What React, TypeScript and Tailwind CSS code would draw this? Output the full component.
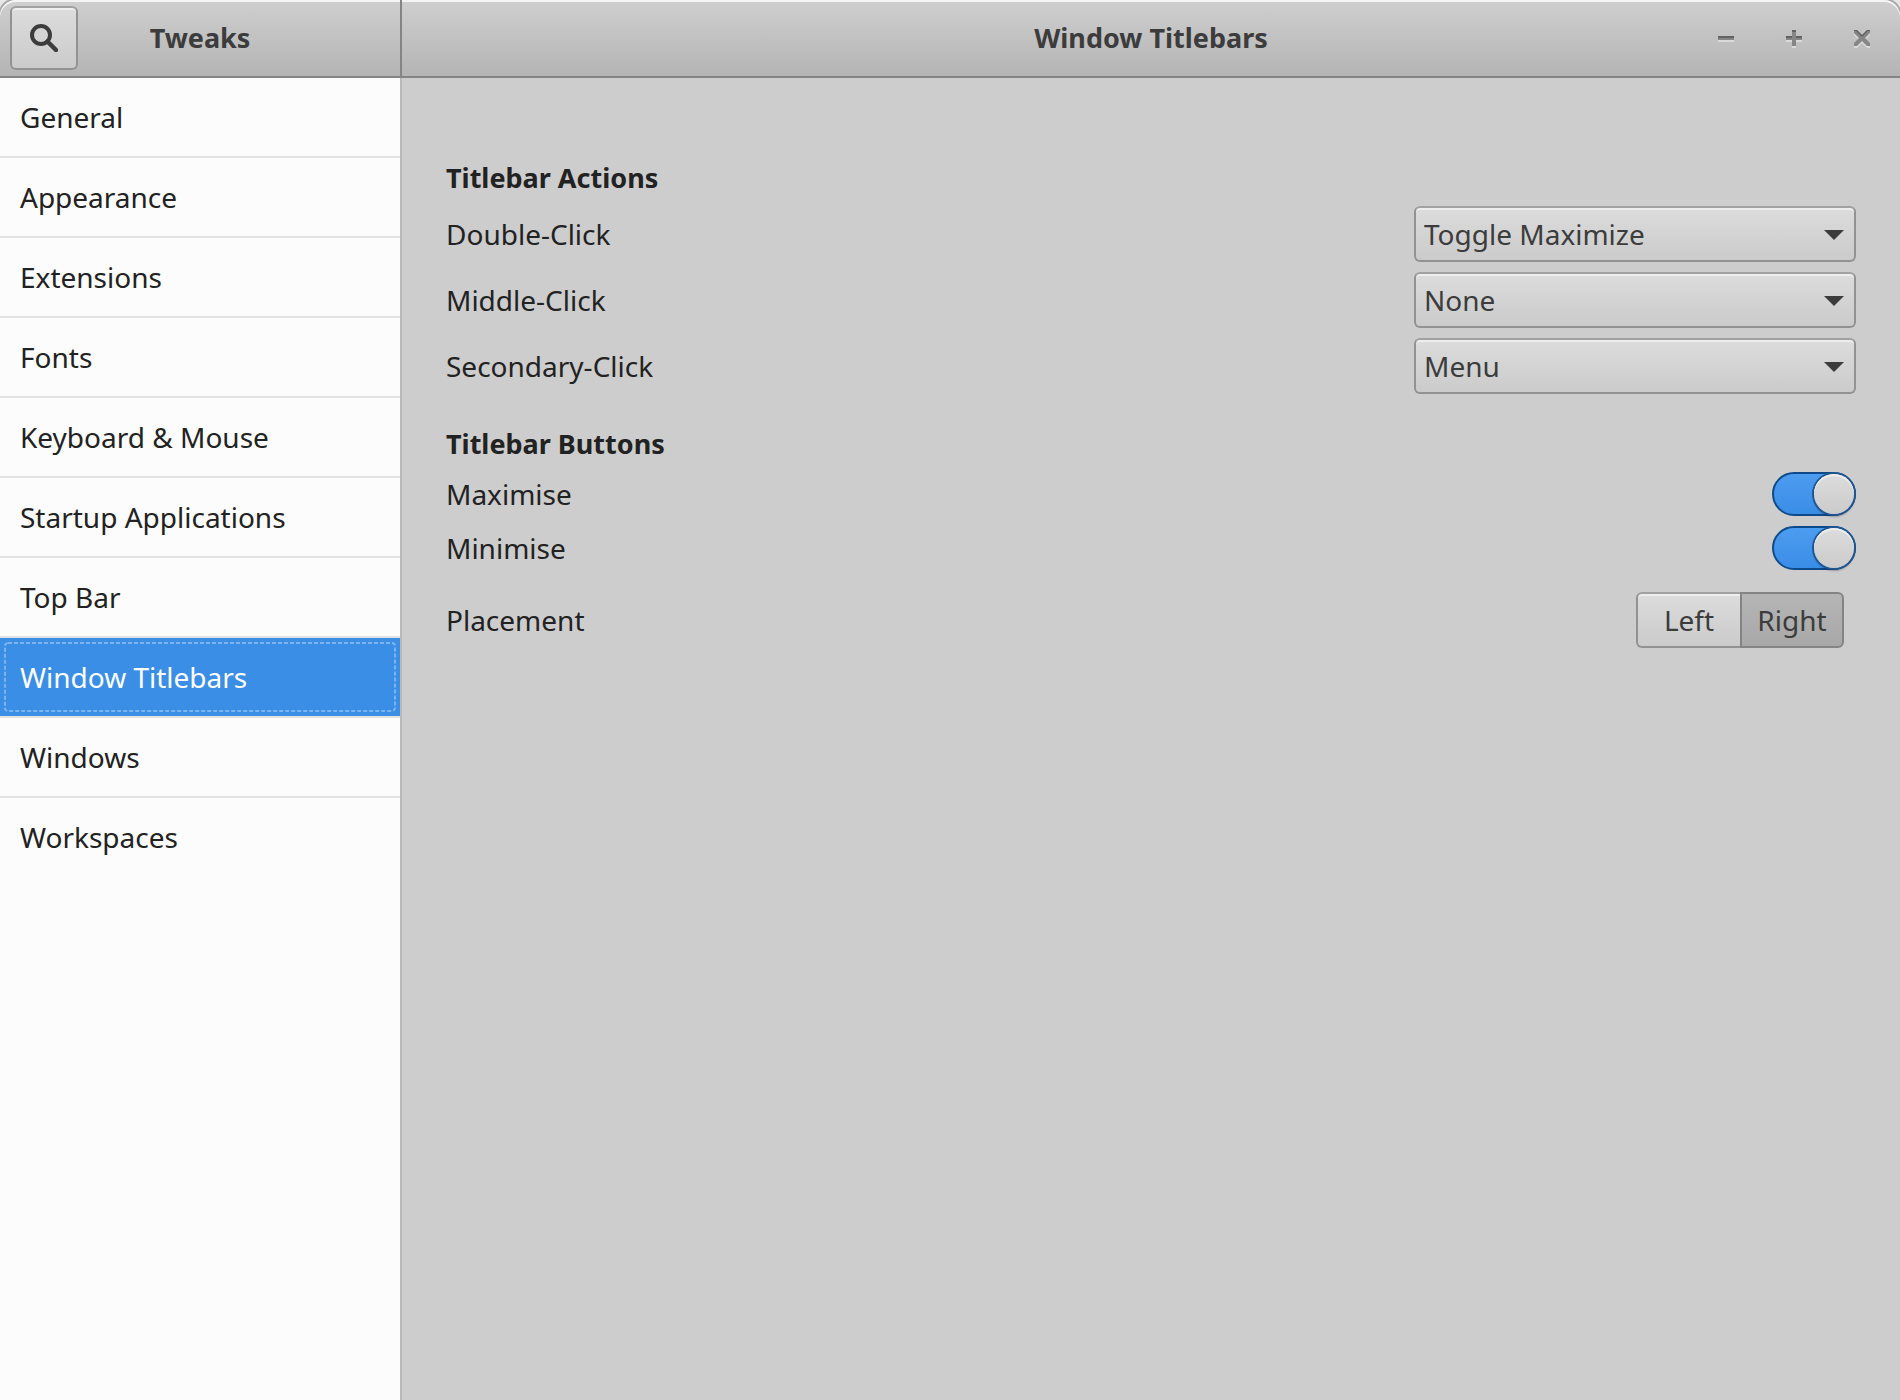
import { useState } from "react";

const sections = [
  "General",
  "Appearance",
  "Extensions",
  "Fonts",
  "Keyboard & Mouse",
  "Startup Applications",
  "Top Bar",
  "Window Titlebars",
  "Windows",
  "Workspaces",
];

const clickActions = ["Toggle Maximize", "Minimize", "Lower", "Menu", "None"];

const raised =
  "border-2 border-[#929292] border-t-[#a1a1a1] bg-linear-to-b from-[#dcdcdc] to-[#cbcbcb] shadow-[inset_0_2px_0_#eeeeee]";

function SearchIcon() {
  return (
    <svg width="28" height="28" viewBox="0 0 28 28" fill="none" stroke="#3c3c3c" aria-hidden="true">
      <circle cx="11" cy="11" r="9" strokeWidth="4" />
      <path d="M17.5 17.5 26 26" strokeWidth="4.5" strokeLinecap="round" />
    </svg>
  );
}

function FocusRing() {
  return (
    <svg className="pointer-events-none absolute inset-1 size-[calc(100%-8px)] overflow-visible" aria-hidden="true">
      <rect
        x="1"
        y="1"
        rx="3"
        className="h-[calc(100%-2px)] w-[calc(100%-2px)]"
        fill="none"
        stroke="#7db4ee"
        strokeWidth="2"
        strokeDasharray="4 2"
      />
    </svg>
  );
}

function WindowButton({ label, path, shade }: { label: string; path: string; shade: string }) {
  return (
    <button type="button" aria-label={label} className="flex size-12 items-center justify-center">
      <svg width="20" height="20" viewBox="0 0 20 20" aria-hidden="true">
        <path d={path} transform="translate(0 2)" fill="#dadada" />
        <path d={path} fill="#868686" />
        <path d={shade} fill="#626262" />
      </svg>
    </button>
  );
}

function ActionRow({ id, label, initial }: { id: string; label: string; initial: string }) {
  const [value, setValue] = useState(initial);

  return (
    <div className="flex items-center justify-between">
      <label htmlFor={id}>{label}</label>
      <div className="relative w-[442px]">
        <select
          id={id}
          value={value}
          onChange={(e) => setValue(e.target.value)}
          className={`block h-14 w-full appearance-none rounded-md px-2 text-[#3c3c3c] ${raised}`}
        >
          {clickActions.map((action) => (
            <option key={action}>{action}</option>
          ))}
        </select>
        <svg
          width="20"
          height="10"
          viewBox="0 0 20 10"
          className="pointer-events-none absolute top-6 right-3"
          aria-hidden="true"
        >
          <path d="M0 0h20L10 10z" fill="#3c3c3c" />
        </svg>
      </div>
    </div>
  );
}

function SwitchRow({ id, label }: { id: string; label: string }) {
  const [on, setOn] = useState(true);

  return (
    <div className="flex items-center justify-between">
      <label htmlFor={id}>{label}</label>
      <input
        id={id}
        type="checkbox"
        role="switch"
        checked={on}
        onChange={(e) => setOn(e.target.checked)}
        className="flex h-11 w-[84px] appearance-none rounded-full border-2 border-[#929292] bg-[#b4b4b4] before:size-10 before:rounded-full before:bg-linear-to-b before:from-[#dcdcdc] before:to-[#cbcbcb] before:shadow-[0_0_0_2px_#1f5590,0_3px_2px_#00000040,inset_0_2px_0_#eeeeee] checked:justify-end checked:border-[#0f4a88] checked:bg-linear-to-b checked:from-[#4c9cf0] checked:to-[#3a8de6]"
      />
    </div>
  );
}

export default function App() {
  const [section, setSection] = useState("Window Titlebars");
  const [placement, setPlacement] = useState("Right");

  return (
    <div className="flex min-h-screen flex-col bg-[#e6e6e6] font-['Noto_Sans',sans-serif] text-[28px] leading-9 text-[#222222]">
      <header className="flex h-[78px] rounded-t-2xl border-b-2 border-[#848484] bg-linear-to-b from-[#cfcfcf] to-[#b4b4b4] text-[27px] font-bold text-[#3c3c3c] shadow-[inset_0_2px_0_#f4f4f4,0_0_0_2px_#a8a8a8]">
        <div className="flex w-[402px] shrink-0 items-center border-r-2 border-[#848484] px-2.5">
          <div className="flex-1">
            <button
              type="button"
              aria-label="Search"
              className={`flex h-16 w-[68px] items-center justify-center rounded-md ${raised}`}
            >
              <SearchIcon />
            </button>
          </div>
          <h1>Tweaks</h1>
          <div className="flex-1" />
        </div>
        <div className="flex flex-1 items-center px-3.5">
          <div className="flex-1" />
          <h2>{section}</h2>
          <div className="flex flex-1 justify-end gap-5">
            <WindowButton label="Minimize" path="M2 8h16v4H2z" shade="M2 8h16v2H2z" />
            <WindowButton
              label="Maximize"
              path="M8 2h4v6h6v4h-6v6H8v-6H2V8h6z"
              shade="M8 2h4v2H8zM2 8h6v2H2zM12 8h6v2h-6z"
            />
            <WindowButton
              label="Close"
              path="M2 2h3l5 5 5-5h3v3l-5 5 5 5v3h-3l-5-5-5 5H2v-3l5-5-5-5z"
              shade="M2 2h3l5 5 5-5h3v1h-2l-6 6-6-6H2z"
            />
          </div>
        </div>
      </header>

      <div className="flex flex-1">
        <nav className="w-[402px] shrink-0 border-r-2 border-[#b9b9b9] bg-[#fcfcfc]">
          <ul>
            {sections.map((name) => (
              <li key={name} className="border-b-2 border-[#e2e2e2] last:border-b-0">
                <button
                  type="button"
                  aria-current={name === section ? "page" : undefined}
                  onClick={() => setSection(name)}
                  className="relative block h-[78px] w-full px-5 text-left aria-[current=page]:bg-[#3a8ee6] aria-[current=page]:text-white"
                >
                  {name}
                  {name === section && <FocusRing />}
                </button>
              </li>
            ))}
          </ul>
        </nav>

        <main className="flex-1 bg-[#cdcdcd] px-11 pt-[82px]">
          <h3 className="mb-2.5 text-[27px] font-bold">Titlebar Actions</h3>
          <div className="flex flex-col gap-2.5">
            <ActionRow id="double-click" label="Double-Click" initial="Toggle Maximize" />
            <ActionRow id="middle-click" label="Middle-Click" initial="None" />
            <ActionRow id="secondary-click" label="Secondary-Click" initial="Menu" />
          </div>

          <h3 className="mt-8 mb-2.5 text-[27px] font-bold">Titlebar Buttons</h3>
          <div className="flex flex-col gap-2.5">
            <SwitchRow id="maximise" label="Maximise" />
            <SwitchRow id="minimise" label="Minimise" />
          </div>
          <div className="mt-[22px] flex items-center justify-between">
            <span id="placement">Placement</span>
            <div role="group" aria-labelledby="placement" className="mr-3 flex text-[#3c3c3c]">
              {["Left", "Right"].map((side) => (
                <button
                  key={side}
                  type="button"
                  aria-pressed={side === placement}
                  onClick={() => setPlacement(side)}
                  className={`h-14 w-[104px] first:rounded-l-md first:border-r-0 last:rounded-r-md ${
                    side === placement
                      ? "border-2 border-[#848484] bg-linear-to-b from-[#b5b5b5] to-[#a8a8a8]"
                      : raised
                  }`}
                >
                  {side}
                </button>
              ))}
            </div>
          </div>
        </main>
      </div>
    </div>
  );
}
